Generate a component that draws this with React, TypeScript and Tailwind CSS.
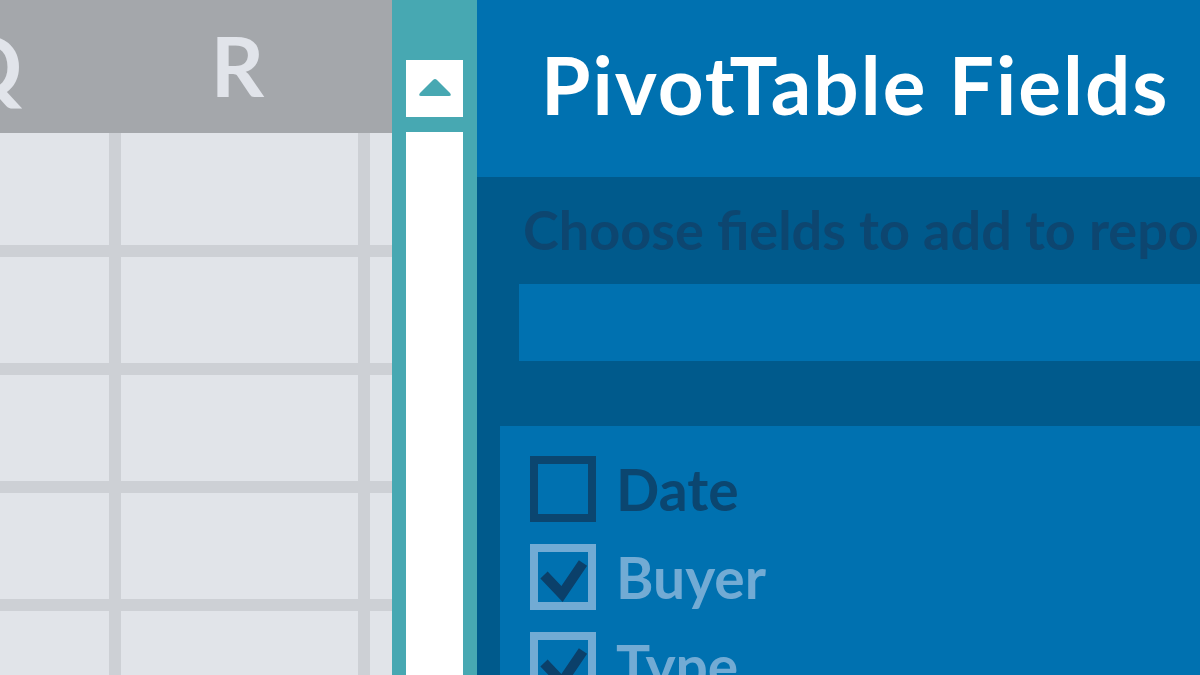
import { Fragment } from 'react';

const FONT = "font-['Lato','Liberation_Sans',sans-serif]";

const columns = ['Q', 'R', 'S'];
const rows = [0, 1, 2, 3, 4];

function Sheet() {
    return (
        <div className="w-[392px] h-full overflow-hidden bg-[#cdd0d5] flex flex-col">
            <div className="h-[133px] shrink-0 bg-[#a4a7ab] flex ml-[-128px] gap-[12px]">
                {columns.map((c) => (
                    <div key={c} className="w-[237px] shrink-0 flex items-center justify-center">
                        <span className={`${FONT} font-bold text-[83px] leading-none text-[#e1e4ea] mt-[-2px] mr-[4px]`}>{c}</span>
                    </div>
                ))}
            </div>
            <div className="grid grid-cols-[237px_237px_237px] grid-rows-[112px_106px_106px_106px_106px] gap-[12px] ml-[-128px]">
                {rows.map((r) => (
                    <Fragment key={r}>
                        {columns.map((c) => (
                            <div key={c + r} className="bg-[#e1e4e9]" />
                        ))}
                    </Fragment>
                ))}
            </div>
        </div>
    );
}

function ScrollBar() {
    return (
        <div className="w-[85px] h-full bg-[#47a8b2] flex flex-col pl-[14px] pt-[60px] gap-[15px]">
            <div className="w-[57px] h-[57px] bg-white flex items-center justify-center">
                <svg width="36" height="20" viewBox="0 0 36 20" className="mt-[-1px]">
                    <path d="M16 2 Q18 0 20 2 L33 15 Q35 18 32 18 L4 18 Q1 18 3 15 Z" fill="#47a8b2" />
                </svg>
            </div>
            <div className="w-[57px] flex-1 bg-white" />
        </div>
    );
}

function CheckBox({ checked }: { checked: boolean }) {
    if (!checked) {
        return <div className="w-[66px] h-[66px] shrink-0 border-[8px] border-[#0b4670]" />;
    }
    return (
        <div className="w-[66px] h-[66px] shrink-0 border-[8px] border-[#72abd4] flex items-center justify-center">
            <svg width="50" height="50" viewBox="0 0 50 50">
                <path d="M6 23 L24 42 L45 11" fill="none" stroke="#0b406a" strokeWidth="10" strokeLinejoin="miter" />
            </svg>
        </div>
    );
}

const fields = [
    { name: 'Date', checked: false },
    { name: 'Buyer', checked: true },
    { name: 'Type', checked: true },
];

function FieldsPanel() {
    return (
        <div className={`flex-1 h-full flex flex-col overflow-hidden ${FONT}`}>
            <div className="h-[177px] shrink-0 bg-[#0071b0] pl-[64px] pt-[44px]">
                <h1 className="text-[80px] leading-none font-bold tracking-[2px] text-white whitespace-nowrap">PivotTable Fields</h1>
            </div>
            <div className="flex-1 bg-[#005a8c] flex flex-col">
                <p className="pl-[46px] pt-[26px] text-[54px] leading-none font-bold text-[#0d4670] whitespace-nowrap">
                    Choose fields to add to report:
                </p>
                <div className="ml-[42px] mt-[27px] h-[77px] shrink-0 bg-[#0071b0]" />
                <div className="ml-[23px] mt-[65px] flex-1 bg-[#0071b0] pl-[30px] pt-[30px] flex flex-col gap-[22px]">
                    {fields.map((f) => (
                        <div key={f.name} className="flex items-center gap-[20px]">
                            <CheckBox checked={f.checked} />
                            <span
                                className={`text-[57px] leading-none font-bold whitespace-nowrap ${
                                    f.checked ? 'text-[#72abd4]' : 'text-[#0b4670]'
                                }`}
                            >
                                {f.name}
                            </span>
                        </div>
                    ))}
                </div>
            </div>
        </div>
    );
}

export default function App() {
    return (
        <div className="w-[1200px] h-[675px] flex overflow-hidden bg-white">
            <Sheet />
            <ScrollBar />
            <FieldsPanel />
        </div>
    );
}
